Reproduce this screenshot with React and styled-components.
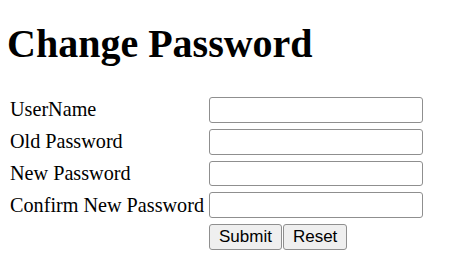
import styled, { createGlobalStyle } from 'styled-components';

const GlobalStyle = createGlobalStyle`
  body {
    margin: 0;
    background: #ffffff;
    font-family: 'Liberation Serif', 'Times New Roman', serif;
    color: #000000;
  }
`;

export default function App() {
  const fields = ['UserName', 'Old Password', 'New Password', 'Confirm New Password'];
  return (
    <>
      <GlobalStyle />
      <Page>
        <Title>Change Password</Title>
        <Form onSubmit={(e) => e.preventDefault()}>
          {fields.map((label) => (
            <Row key={label}>
              <Label>{label}</Label>
              <Field type={label === 'UserName' ? 'text' : 'password'} />
            </Row>
          ))}
          <Row>
            <span />
            <Buttons>
              <Button type="submit">Submit</Button>
              <Button type="reset">Reset</Button>
            </Buttons>
          </Row>
        </Form>
      </Page>
    </>
  );
}

const Page = styled.div`
  padding: 21px 8px 0 7px;
`;

const Title = styled.h1`
  margin: 0 0 30px 0;
  font-size: 40px;
  line-height: 46px;
  font-weight: bold;
`;

const Form = styled.form`
  display: grid;
  grid-template-columns: auto auto;
  justify-content: start;
  row-gap: 6px;
  column-gap: 5px;
  padding-left: 3px;
`;

const Row = styled.div`
  display: contents;
`;

const Label = styled.label`
  font-size: 20.2px;
  align-self: center;
`;

const Field = styled.input`
  box-sizing: border-box;
  width: 214px;
  height: 25.75px;
  margin: 0;
  border: 1px solid #8f8f8f;
  border-radius: 3px;
  padding: 2px 4px;
  font-family: 'Liberation Sans', Arial, sans-serif;
  font-size: 17px;
  background: #ffffff;
`;

const Buttons = styled.div`
  display: flex;
  gap: 1px;
`;

const Button = styled.button`
  box-sizing: border-box;
  height: 26px;
  margin: 0;
  padding: 0 9px;
  border: 1px solid #8f8f8f;
  border-radius: 3px;
  background: #efefef;
  font-family: 'Liberation Sans', Arial, sans-serif;
  font-size: 17px;
  color: #000000;
`;
